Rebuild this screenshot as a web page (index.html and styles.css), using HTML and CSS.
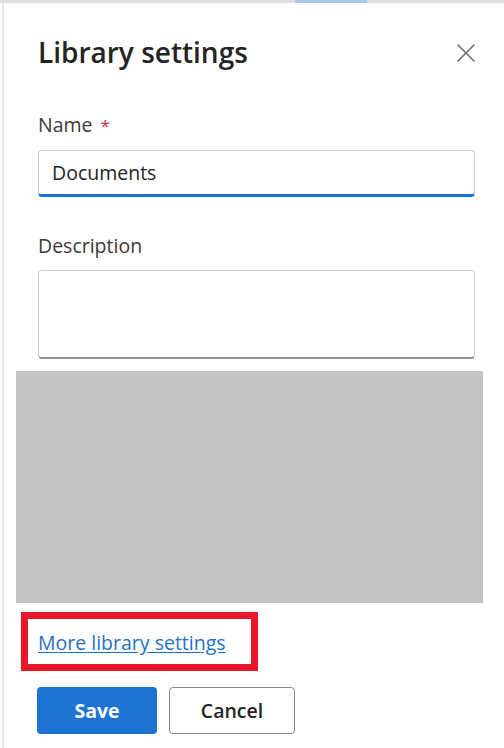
FILE: index.html
```html
<!DOCTYPE html>
<html lang="en">
<head>
<meta charset="utf-8">
<title>Library settings</title>
<link rel="stylesheet" href="styles.css">
</head>
<body>
<div class="strip">
  <div class="strip-gray lead"></div>
  <div class="strip-blue"></div>
  <div class="strip-gray fill"></div>
</div>
<div class="panel">
  <div class="header">
    <h1 class="title">Library settings</h1>
    <svg class="close" width="18" height="18" viewBox="0 0 18 18" aria-label="Close">
      <path d="M1 1 L17 17 M17 1 L1 17" stroke="#6b6b6b" stroke-width="1.6" fill="none" stroke-linecap="round"/>
    </svg>
  </div>
  <div class="field name-field">
    <div class="label">Name<span class="req">*</span></div>
    <div class="input">Documents</div>
  </div>
  <div class="field desc-field">
    <div class="label">Description</div>
    <div class="textarea"></div>
  </div>
  <div class="placeholder"></div>
  <div class="highlight">
    <a class="link" href="#">More library settings</a>
  </div>
  <div class="actions">
    <button class="btn primary">Save</button>
    <button class="btn secondary">Cancel</button>
  </div>
</div>
</body>
</html>
```
FILE: styles.css
```css
html, body {
  margin: 0;
  padding: 0;
  background: #ffffff;
  font-family: "Open Sans", "Noto Sans", sans-serif;
  color: #323130;
}

.strip {
  display: flex;
  height: 3px;
}
.strip-gray {
  background: #dedede;
}
.strip-gray.lead {
  width: 295px;
}
.strip-gray.fill {
  flex: 1;
}
.strip-blue {
  width: 72px;
  background: #a9c8eb;
}

.panel {
  margin-left: 2px;
  border-left: 2px solid #e6e6e6;
  padding: 0 21px 0 12px;
  height: 745px;
  box-sizing: border-box;
}

.header {
  display: flex;
  align-items: center;
  justify-content: space-between;
  padding: 31px 8px 0 22px;
  height: 36px;
}
.title {
  margin: 0;
  font-size: 28px;
  line-height: 36px;
  font-weight: 600;
  color: #242424;
}
.close {
  display: block;
  margin-top: 2px;
}

.field {
  margin: 0 8px 0 22px;
}
.name-field {
  margin-top: 42px;
}
.desc-field {
  margin-top: 36px;
}
.label {
  font-size: 19.5px;
  line-height: 26px;
  color: #3b3a39;
  margin-bottom: 12px;
}
.desc-field .label {
  margin-bottom: 11px;
}
.req {
  color: #c4314b;
  margin-left: 8px;
  font-size: 17px;
  line-height: 0;
}

.input {
  height: 47px;
  box-sizing: border-box;
  border: 1px solid #cdcdcd;
  border-bottom: 3px solid #1b74d1;
  border-radius: 4px;
  padding: 9px 13px 0 13px;
  font-size: 19.5px;
  line-height: 26px;
  color: #242424;
}

.textarea {
  height: 89px;
  box-sizing: border-box;
  border: 1px solid #d1d1d1;
  border-bottom: 2px solid #8f8f8f;
  border-radius: 4px;
}

.placeholder {
  margin-top: 12px;
  height: 232px;
  background: #c4c4c4;
}

.highlight {
  margin: 9px 0 0 5px;
  width: 237px;
  height: 59px;
  box-sizing: border-box;
  border: 7px solid #e8182b;
  padding: 11px 0 0 10px;
}
.link {
  font-size: 19.5px;
  line-height: 26px;
  color: #1f71c6;
  text-decoration: underline;
  text-underline-offset: 2px;
}

.actions {
  display: flex;
  gap: 12px;
  margin: 16px 0 0 21px;
}
.btn {
  height: 47px;
  box-sizing: border-box;
  border-radius: 4px;
  font-family: "Open Sans", "Noto Sans", sans-serif;
  font-size: 19.5px;
  font-weight: 700;
  padding: 0;
  cursor: pointer;
}
.primary {
  width: 120px;
  background: #1b74d1;
  border: none;
  color: #ffffff;
}
.secondary {
  width: 126px;
  background: #ffffff;
  border: 1px solid #8a8a8a;
  color: #242424;
  font-weight: 600;
}
```
